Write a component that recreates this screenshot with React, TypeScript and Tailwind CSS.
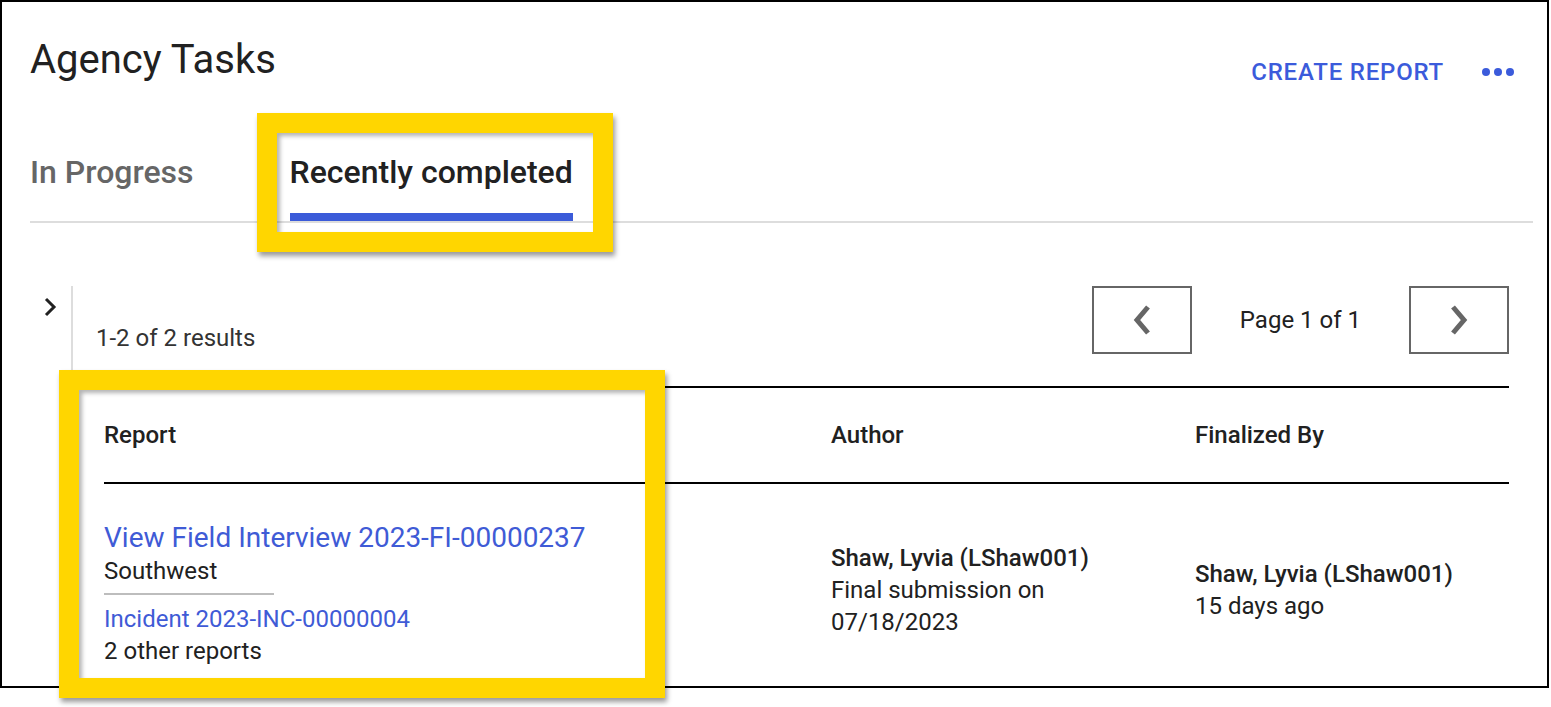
import React from "react";

const rows = [
  {
    title: "View Field Interview 2023-FI-00000237",
    area: "Southwest",
    incident: "Incident 2023-INC-00000004",
    others: "2 other reports",
    author: "Shaw, Lyvia (LShaw001)",
    submitted: "07/18/2023",
    finalizedBy: "Shaw, Lyvia (LShaw001)",
    finalizedAgo: "15 days ago",
  },
];

function Chevron({ dir }: { dir: "left" | "right" }) {
  return (
    <svg width="20" height="32" viewBox="0 0 20 32" fill="none">
      <polyline
        points={dir === "left" ? "16,3 5,16 16,29" : "4,3 15,16 4,29"}
        stroke="#666"
        strokeWidth="5"
        strokeLinejoin="miter"
      />
    </svg>
  );
}

// annotation frame laid over the screenshot
function Highlight({ className }: { className: string }) {
  return (
    <div
      className={`absolute border-[20px] border-[#ffd600] shadow-[2px_4px_5px_rgba(0,0,0,0.4),inset_3px_3px_4px_rgba(0,0,0,0.3)] pointer-events-none ${className}`}
    />
  );
}

export default function App() {
  return (
    <div className="relative w-[1551px] h-[707px] bg-white font-['Roboto',sans-serif] text-[#212121]">
      <div className="w-[1549px] h-[688px] border-2 border-black overflow-hidden pl-[28px] pr-[14px]">
        {/* Header */}
        <div className="flex items-start justify-between pt-[34px]">
          <h1 className="text-[40px] leading-[48px] font-normal text-[#212121]">Agency Tasks</h1>
          <div className="flex items-center h-[48px] mt-[12px] mr-[19px]">
            <button className="text-[24px] font-medium tracking-[0.8px] text-[#3b5bdb]">CREATE REPORT</button>
            <button className="ml-[38px] flex items-center gap-[4px]">
              <span className="w-[8px] h-[8px] rounded-full bg-[#3b5bdb]" />
              <span className="w-[8px] h-[8px] rounded-full bg-[#3b5bdb]" />
              <span className="w-[8px] h-[8px] rounded-full bg-[#3b5bdb]" />
            </button>
          </div>
        </div>

        {/* Tabs */}
        <div className="flex gap-[96px] mt-[56px] border-b-2 border-[#dddddd]">
          <div className="flex flex-col">
            <span className="text-[32px] leading-[40px] font-medium text-[#666666]">In Progress</span>
            <div className="h-2 mt-[21px]" />
          </div>
          <div className="flex flex-col">
            <span className="text-[32px] leading-[40px] font-medium text-[#212121]">Recently completed</span>
            <div className="h-2 mt-[21px] bg-[#3b5bd9]" />
          </div>
        </div>

        {/* Body */}
        <div className="flex mt-[63px]">
          <div className="w-[41px] shrink-0 pt-[11px] pl-[12px]">
            <svg width="16" height="20" viewBox="0 0 16 20" fill="none">
              <polyline points="4,2 12,10 4,18" stroke="#212121" strokeWidth="3" />
            </svg>
          </div>
          <div className="flex-1 border-l-2 border-[#dddddd] pl-[23px] pr-[24px]">
            <div className="flex items-start justify-between">
              <p className="mt-[36px] text-[24px] leading-[32px] text-[#333333]">1-2 of 2 results</p>
              <div className="flex items-center gap-[48px]">
                <button className="w-[100px] h-[68px] border-2 border-[#666666] flex items-center justify-center">
                  <Chevron dir="left" />
                </button>
                <span className="text-[24px] leading-[32px] text-[#212121]">Page 1 of 1</span>
                <button className="w-[100px] h-[68px] border-2 border-[#666666] flex items-center justify-center">
                  <Chevron dir="right" />
                </button>
              </div>
            </div>

            <div className="ml-[8px] mt-[32px] border-t-2 border-black">
              <div className="grid grid-cols-[727px_364px_1fr] h-[96px] items-center border-b-2 border-black text-[24px] leading-[32px] font-medium">
                <span>Report</span>
                <span>Author</span>
                <span>Finalized By</span>
              </div>
              {rows.map((r) => (
                <div key={r.title} className="grid grid-cols-[727px_364px_1fr] items-start pt-[37px] pb-[30px] text-[24px] leading-[32px]">
                  <div className="flex flex-col">
                    <a className="text-[28px] leading-[34px] text-[#3f5bd6]">{r.title}</a>
                    <span className="text-[#212121]">{r.area}</span>
                    <div className="w-[170px] h-[2px] bg-[#bdbdbd] mt-[6px] mb-[8px]" />
                    <a className="text-[#3f5bd6]">{r.incident}</a>
                    <span className="text-[#212121]">{r.others}</span>
                  </div>
                  <div className="flex flex-col mt-[21px]">
                    <span className="font-medium">{r.author}</span>
                    <span>Final submission on</span>
                    <span>{r.submitted}</span>
                  </div>
                  <div className="flex flex-col mt-[37px]">
                    <span className="font-medium">{r.finalizedBy}</span>
                    <span>{r.finalizedAgo}</span>
                  </div>
                </div>
              ))}
            </div>
          </div>
        </div>
      </div>

      <Highlight className="left-[257px] top-[113px] w-[356px] h-[139px]" />
      <Highlight className="left-[59px] top-[370px] w-[606px] h-[328px]" />
    </div>
  );
}
